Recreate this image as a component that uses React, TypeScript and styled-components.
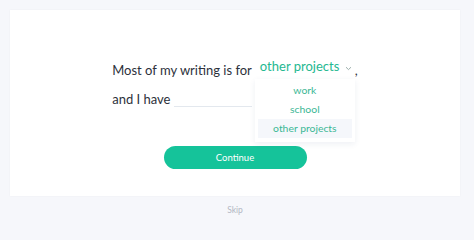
import styled, { createGlobalStyle } from 'styled-components';

const GlobalStyle = createGlobalStyle`
    html, body {
        margin: 0;
        padding: 0;
        background: #f6f7fb;
        font-family: Lato, "Noto Sans", sans-serif;
        overflow: hidden;
    }
`

const Page = styled.div`
    width: 474px;
    height: 224px;
    box-sizing: border-box;
    padding: 10px 14px 0 10px;
    display: flex;
    flex-direction: column;
    overflow: hidden;
`

const Card = styled.div`
    height: 186px;
    flex-shrink: 0;
    background: #ffffff;
    display: flex;
    flex-direction: column;
    align-items: center;
    padding-top: 44px;
    box-sizing: border-box;
    box-shadow: 0 0 2px rgba(30, 40, 80, 0.04);
`

const Sentence = styled.div`
    display: flex;
    flex-direction: column;
    gap: 5px;
    color: #2d313b;
    font-size: 13px;
`

const Line = styled.div`
    display: flex;
    align-items: flex-end;
    height: 24px;
    white-space: nowrap;
`

const Select = styled.div`
    position: relative;
    margin-left: 3px;
    width: 100px;
    box-sizing: border-box;
    padding: 0 3px 0 5px;
    display: flex;
    align-items: center;
    justify-content: space-between;
    color: #25b891;
    height: 24px;
`

const Chevron = styled.svg`
    width: 7px;
    height: 5px;
    margin-top: 4px;
`

const Menu = styled.ul`
    position: absolute;
    top: 25px;
    left: 0;
    width: 100px;
    margin: 0;
    padding: 2px 3px 4px;
    box-sizing: border-box;
    list-style: none;
    background: #ffffff;
    box-shadow: 0 2px 6px rgba(40, 60, 110, 0.08);
    z-index: 2;
`

const MenuItem = styled.li<{ $active?: boolean }>`
    height: 19px;
    line-height: 19px;
    text-align: center;
    font-size: 10.4px;
    color: #3bb795;
    background: ${p => (p.$active ? '#f5f7fb' : 'transparent')};
`

const Input = styled.div`
    width: 78px;
    height: 20px;
    margin-left: 4px;
    border-bottom: 1px solid #e3e8ee;
`

const Button = styled.button`
    margin-top: 39px;
    width: 143px;
    height: 23px;
    border: none;
    border-radius: 12px;
    background: #15c39a;
    color: #ffffff;
    font-family: inherit;
    font-size: 9.5px;
    padding: 0;
`

const Skip = styled.div`
    flex: 1;
    display: flex;
    align-items: center;
    justify-content: center;
    font-size: 8.5px;
    color: #b4b8c4;
`

export default function App() {
    return (
        <>
            <GlobalStyle />
            <Page>
                <Card>
                    <Sentence>
                        <Line>
                            Most of my writing is for
                            <Select>
                                other projects
                                <Chevron viewBox="0 0 7 5">
                                    <path d="M1 1.2 L3.5 3.6 L6 1.2" fill="none" stroke="#8fa5a0" strokeWidth="0.9" />
                                </Chevron>
                                <Menu>
                                    <MenuItem>work</MenuItem>
                                    <MenuItem>school</MenuItem>
                                    <MenuItem $active>other projects</MenuItem>
                                </Menu>
                            </Select>
                            ,
                        </Line>
                        <Line>
                            and I have
                            <Input />
                        </Line>
                    </Sentence>
                    <Button>Continue</Button>
                </Card>
                <Skip>Skip</Skip>
            </Page>
        </>
    );
}
